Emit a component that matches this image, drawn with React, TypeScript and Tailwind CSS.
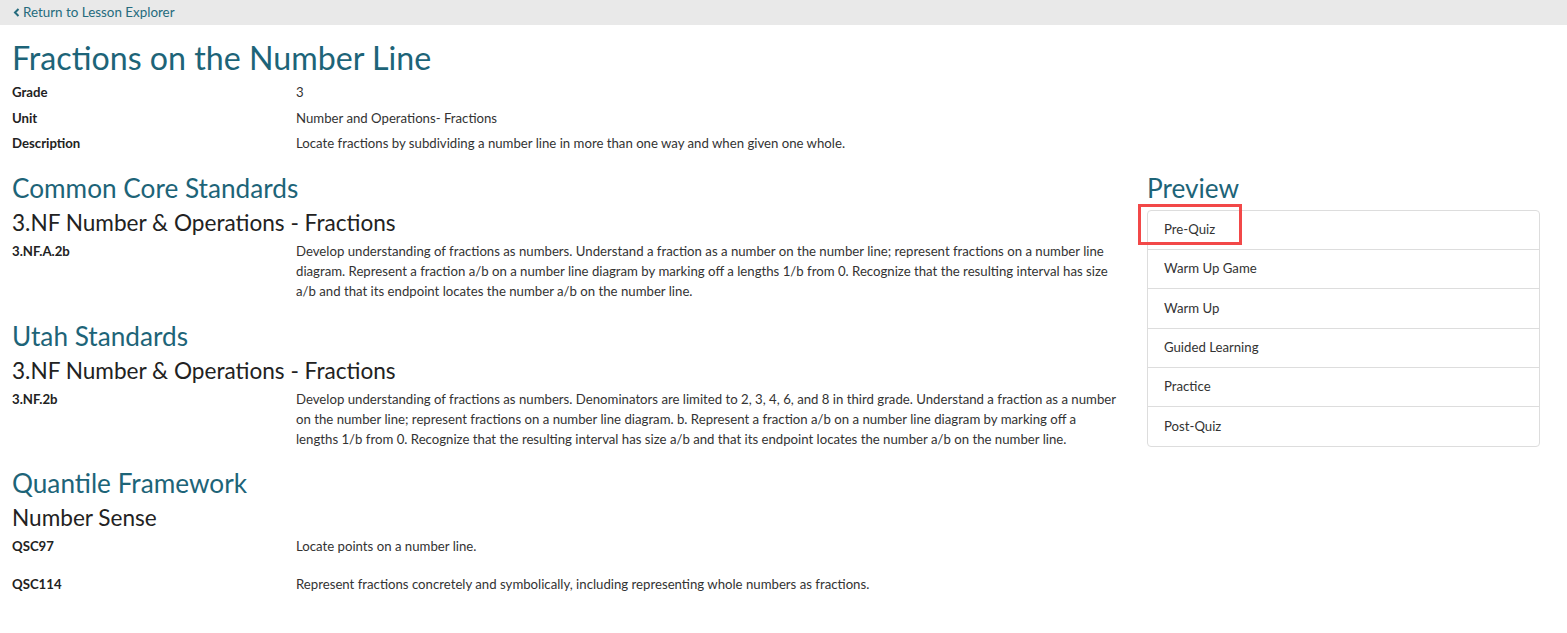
import React from "react";

const font = { fontFamily: "Lato, 'Open Sans', sans-serif" };

const meta = [
  { label: "Grade", value: "3" },
  { label: "Unit", value: "Number and Operations- Fractions" },
  { label: "Description", value: "Locate fractions by subdividing a number line in more than one way and when given one whole." },
];

const sections = [
  {
    title: "Common Core Standards",
    domain: "3.NF Number & Operations - Fractions",
    rows: [
      {
        code: "3.NF.A.2b",
        text: "Develop understanding of fractions as numbers. Understand a fraction as a number on the number line; represent fractions on a number line diagram. Represent a fraction a/b on a number line diagram by marking off a lengths 1/b from 0. Recognize that the resulting interval has size a/b and that its endpoint locates the number a/b on the number line.",
      },
    ],
  },
  {
    title: "Utah Standards",
    domain: "3.NF Number & Operations - Fractions",
    rows: [
      {
        code: "3.NF.2b",
        text: "Develop understanding of fractions as numbers. Denominators are limited to 2, 3, 4, 6, and 8 in third grade. Understand a fraction as a number on the number line; represent fractions on a number line diagram. b. Represent a fraction a/b on a number line diagram by marking off a lengths 1/b from 0. Recognize that the resulting interval has size a/b and that its endpoint locates the number a/b on the number line.",
      },
    ],
  },
  {
    title: "Quantile Framework",
    domain: "Number Sense",
    rows: [
      { code: "QSC97", text: "Locate points on a number line." },
      { code: "QSC114", text: "Represent fractions concretely and symbolically, including representing whole numbers as fractions." },
    ],
  },
];

const previews = ["Pre-Quiz", "Warm Up Game", "Warm Up", "Guided Learning", "Practice", "Post-Quiz"];

function Row({ label, value }: { label: string; value: string }) {
  return (
    <div className="flex text-[13.2px] leading-[20px]">
      <div className="w-[284px] shrink-0 font-bold text-[#222]">{label}</div>
      <div className="flex-1 text-[#333]">{value}</div>
    </div>
  );
}

export default function App() {
  return (
    <div className="min-h-[633px] bg-white" style={font}>
      <div className="h-[25px] bg-[#e9e9e9] flex items-center pl-[13px]">
        <a href="#" className="flex items-center gap-[3px] text-[13.4px] text-[#256b7d]">
          <svg width="7" height="9" viewBox="0 0 7 9">
            <path d="M5.5 1 L2 4.5 L5.5 8" fill="none" stroke="#256b7d" strokeWidth="2" />
          </svg>
          Return to Lesson Explorer
        </a>
      </div>

      <div className="pl-[12px] pr-[27px]">
        <h1 className="mt-[15px] text-[32.2px] leading-[35px] text-[#1d6478]">Fractions on the Number Line</h1>
        <div className="mt-[7px] flex flex-col gap-[5.5px]">
          {meta.map((m) => (
            <Row key={m.label} label={m.label} value={m.value} />
          ))}
        </div>

        <div className="flex mt-[21px]">
          <div className="flex-1">
            {sections.map((s, i) => (
              <div key={s.title} className={i === 0 ? "" : "mt-[20.5px]"}>
                <h2 className="text-[26.2px] leading-[29px] text-[#1d6478]">{s.title}</h2>
                <h3 className="mt-[8px] text-[22.6px] leading-[24px] text-[#222]">{s.domain}</h3>
                <div className="mt-[6px] flex flex-col gap-[18px]">
                  {s.rows.map((r) => (
                    <Row key={r.code} label={r.code} value={r.text} />
                  ))}
                </div>
              </div>
            ))}
          </div>

          <div className="w-[393px] ml-[28px] shrink-0">
            <h2 className="text-[26.2px] leading-[29px] text-[#1d6478]">Preview</h2>
            <div className="relative mt-[7px]">
              <ul className="border border-[#dddddd] rounded-[4px]">
                {previews.map((p, i) => (
                  <li
                    key={p}
                    className={`h-[39.2px] flex items-center px-[16px] text-[13.2px] text-[#333] ${
                      i < previews.length - 1 ? "border-b border-[#dddddd]" : ""
                    }`}
                  >
                    {p}
                  </li>
                ))}
              </ul>
              <div className="absolute left-[-9px] top-[-6px] w-[104px] h-[41px] border-[3px] border-[#f24848] pointer-events-none" />
            </div>
          </div>
        </div>
      </div>
    </div>
  );
}
